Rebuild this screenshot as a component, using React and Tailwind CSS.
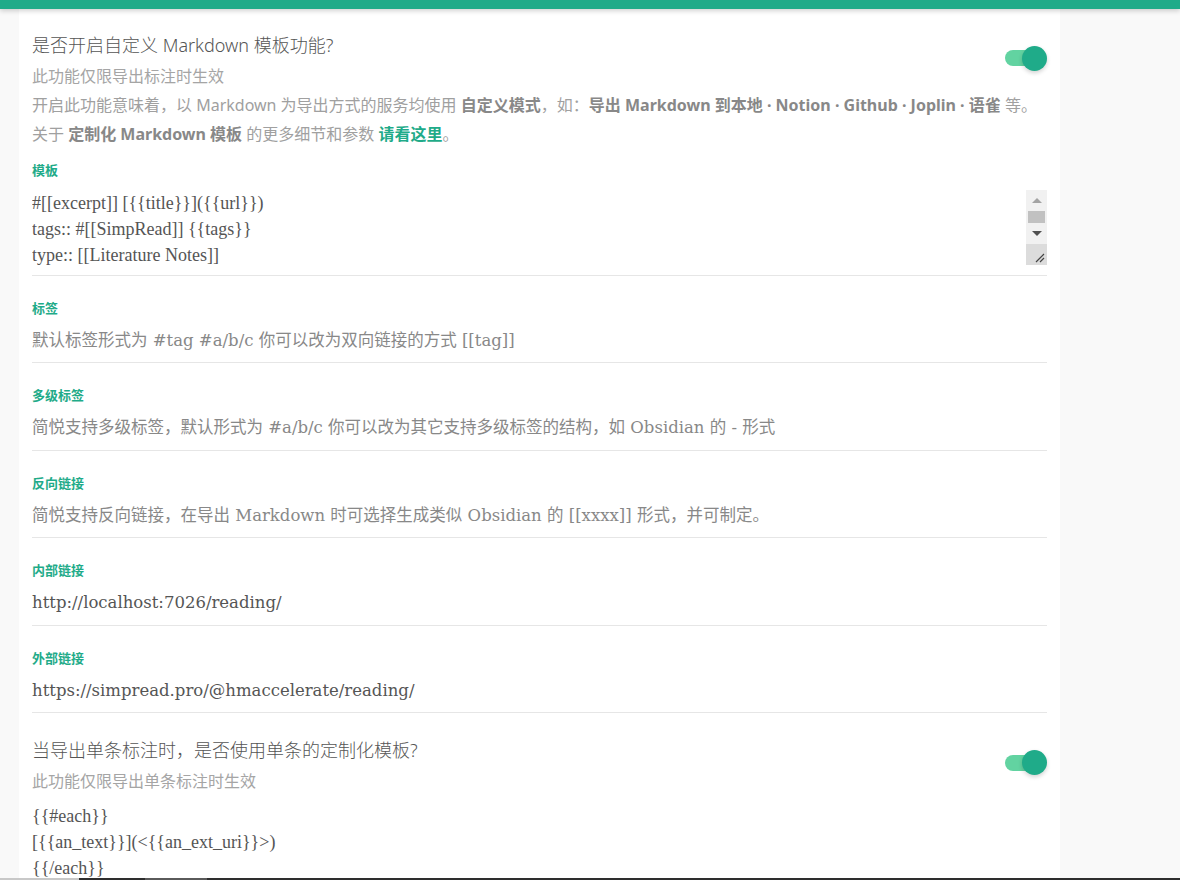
import React from "react";

const uiFont = { fontFamily: '"Noto Sans", "Noto Sans CJK SC", sans-serif' };
const serif = { fontFamily: '"DejaVu Serif", "Noto Sans CJK SC", serif' };
const codeSerif = { fontFamily: '"Liberation Serif", "Noto Sans CJK SC", serif' };

const Toggle = () => (
  <div className="relative w-[42px] h-[25px] shrink-0 mb-[4px]">
    <div className="absolute left-0 top-[4.5px] w-[36px] h-[16px] rounded-full bg-[#62d3a1]"></div>
    <div className="absolute right-0 top-0 w-[25px] h-[25px] rounded-full bg-[#1fab89] shadow-[0_2px_4px_rgba(0,0,0,0.18)]"></div>
  </div>
);

const FakeScrollbar = () => (
  <div className="w-[21px] h-full bg-[#f1f1f1] flex flex-col items-center shrink-0">
    <div className="h-[21px] w-full flex items-center justify-center">
      <div className="w-0 h-0 border-l-[5px] border-r-[5px] border-b-[5px] border-l-transparent border-r-transparent border-b-[#a3a3a3]"></div>
    </div>
    <div className="w-[17px] h-[12px] bg-[#c1c1c1]"></div>
    <div className="h-[21px] w-full flex items-center justify-center">
      <div className="w-0 h-0 border-l-[5px] border-r-[5px] border-t-[5px] border-l-transparent border-r-transparent border-t-[#505050]"></div>
    </div>
    <div className="flex-1 w-full bg-[#dcdcdc] flex items-end justify-end p-[2px]">
      <svg width="12" height="12" viewBox="0 0 12 12">
        <path d="M11 3 L3 11 M11 7 L7 11" stroke="#444" strokeWidth="1.2" fill="none" />
      </svg>
    </div>
  </div>
);

const Field = ({ label, value, placeholder }) => (
  <div className="pt-[24px] pb-[8.4px] border-b border-[#e6e6e6]">
    <div className="text-[13px] leading-4 font-bold text-[#1fab89]">{label}</div>
    <div
      className={`mt-3 text-[16.5px] leading-[26px] h-[26px] whitespace-nowrap ${placeholder ? "text-[#888]" : "text-[#555]"}`}
      style={serif}
    >
      {value}
    </div>
  </div>
);

export default function App() {
  return (
    <div className="h-[880px] flex flex-col bg-[#f9f9f9] overflow-hidden" style={uiFont}>
      <div className="h-[9px] bg-[#20ab89] shadow-[0_2px_5px_rgba(0,0,0,0.18)] relative z-10 shrink-0"></div>
      <div className="flex-1 overflow-hidden">
        <div className="ml-[19px] w-[1041px] bg-white px-[13px] pt-[23px] min-h-full">
          {/* 自定义模板 */}
          <div className="flex items-center justify-between">
            <div>
              <div className="text-[18px] leading-[26px] font-light text-[#555]">是否开启自定义 Markdown 模板功能?</div>
              <div className="mt-[6px] text-[16px] leading-6 text-[#a5a5a5]">此功能仅限导出标注时生效</div>
            </div>
            <Toggle />
          </div>
          <div className="mt-[3px] text-[16px] leading-[29px] text-[#a0a0a0] whitespace-nowrap">
            开启此功能意味着，以 Markdown 为导出方式的服务均使用 <b className="text-[#888]">自定义模式</b>，如：<b className="text-[#888]">导出 Markdown 到本地 · Notion · Github · Joplin · 语雀</b> 等。
          </div>
          <div className="text-[16px] leading-[29px] text-[#a0a0a0]">
            关于 <b className="text-[#888]">定制化 Markdown 模板</b> 的更多细节和参数 <b className="text-[#1fab89]">请看这里</b>。
          </div>

          <div className="pt-[13px] pb-[10px] border-b border-[#e6e6e6]">
            <div className="text-[13px] leading-4 font-bold text-[#1fab89]">模板</div>
            <div className="mt-3 h-[75px] flex overflow-hidden">
              <div className="flex-1 text-[18px] leading-[26px] text-[#555]" style={codeSerif}>
                <div>#[[excerpt]] [{"{{title}}"}]({"{{url}}"})</div>
                <div>tags:: #[[SimpRead]] {"{{tags}}"}</div>
                <div>type:: [[Literature Notes]]</div>
              </div>
              <FakeScrollbar />
            </div>
          </div>

          <Field label="标签" value="默认标签形式为 #tag #a/b/c 你可以改为双向链接的方式 [[tag]]" placeholder />
          <Field label="多级标签" value="简悦支持多级标签，默认形式为 #a/b/c 你可以改为其它支持多级标签的结构，如 Obsidian 的 - 形式" placeholder />
          <Field label="反向链接" value="简悦支持反向链接，在导出 Markdown 时可选择生成类似 Obsidian 的 [[xxxx]] 形式，并可制定。" placeholder />
          <Field label="内部链接" value="http://localhost:7026/reading/" />
          <Field label="外部链接" value="https://simpread.pro/@hmaccelerate/reading/" />

          {/* 单条模板 */}
          <div className="pt-[24px] flex items-center justify-between">
            <div>
              <div className="text-[18px] leading-[26px] font-light text-[#555]">当导出单条标注时，是否使用单条的定制化模板?</div>
              <div className="mt-[6px] text-[16px] leading-6 text-[#a5a5a5]">此功能仅限导出单条标注时生效</div>
            </div>
            <Toggle />
          </div>
          <div className="mt-[10px] text-[18px] leading-[26px] text-[#555]" style={codeSerif}>
            <div>{"{{#each}}"}</div>
            <div>[{"{{an_text}}"}](&lt;{"{{an_ext_uri}}"}&gt;)</div>
            <div>{"{{/each}}"}</div>
            <div>&nbsp;</div>
          </div>
        </div>
      </div>
      <div className="h-[2px] flex shrink-0">
        <div className="w-[79px] bg-[#c8c8c8]"></div>
        <div className="w-[66px] bg-[#2e2e2e]"></div>
        <div className="w-[62px] bg-[#5a5a5a]"></div>
        <div className="flex-1 bg-[#2e2e2e]"></div>
      </div>
    </div>
  );
}
